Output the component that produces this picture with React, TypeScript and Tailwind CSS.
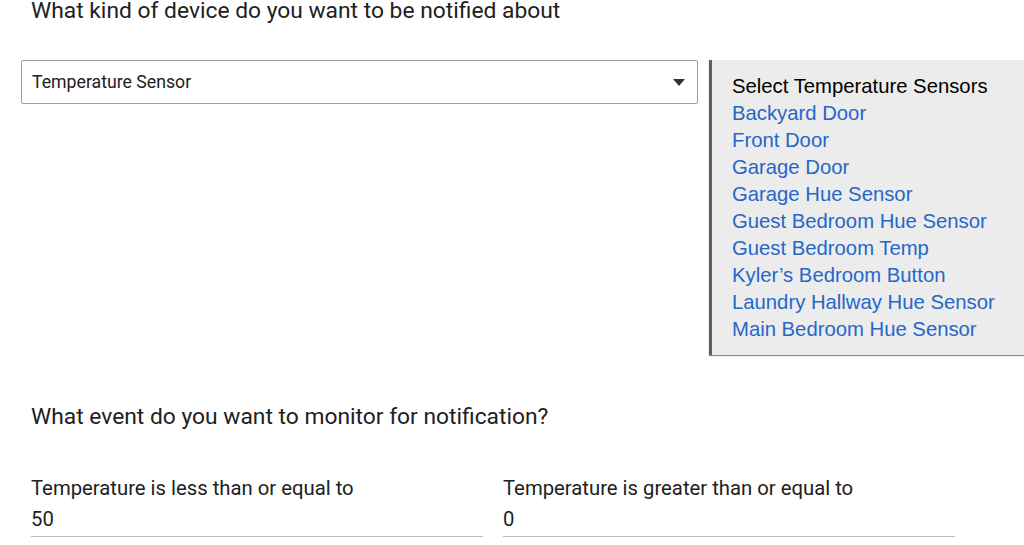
const sensors = [
  "Backyard Door",
  "Front Door",
  "Garage Door",
  "Garage Hue Sensor",
  "Guest Bedroom Hue Sensor",
  "Guest Bedroom Temp",
  "Kyler’s Bedroom Button",
  "Laundry Hallway Hue Sensor",
  "Main Bedroom Hue Sensor",
];

export default function App() {
  return (
    <div className="h-[545px] w-[1024px] overflow-hidden bg-white font-['Roboto',sans-serif] text-[#212121]">
      {/* Device type */}
      <h2 className="pl-[31px] text-[22.8px] leading-[22px] font-normal">
        What kind of device do you want to be notified about
      </h2>

      <div className="mt-[38px] flex items-start">
        <div className="ml-[21px] flex h-[44px] w-[677px] items-center justify-between rounded-[2px] border border-[#9e9e9e] pl-[10px] pr-[12px]">
          <span className="text-[17.7px]">Temperature Sensor</span>
          <svg width="12" height="7" viewBox="0 0 12 7" className="mt-[1px]">
            <path d="M0 0h12L6 7z" fill="#333" />
          </svg>
        </div>

        {/* Sensor picker */}
        <div className="ml-[11px] flex-1 border-l-[3px] border-[#5f5f5f] bg-[#ececec] pt-[13px] pb-[12px] pl-[20px] font-['Liberation_Sans',Arial,sans-serif] text-[20.3px] leading-[27px] shadow-[0_1px_1px_rgba(0,0,0,0.45)]">
          <div className="text-black">Select Temperature Sensors</div>
          {sensors.map((s) => (
            <div key={s} className="text-[#2567c9]">
              {s}
            </div>
          ))}
        </div>
      </div>

      {/* Event */}
      <h2 className="mt-[49px] pl-[31px] text-[22.8px] leading-[26px] font-normal">
        What event do you want to monitor for notification?
      </h2>

      <div className="mt-[45px] flex gap-[20px] pl-[31px]">
        <div className="w-[452px]">
          <div className="text-[20.3px] leading-[26px]">Temperature is less than or equal to</div>
          <div className="mt-[5px] border-b border-[#bdbdbd] pb-[4px] text-[20.3px] leading-[26px]">50</div>
        </div>
        <div className="w-[452px]">
          <div className="text-[20.3px] leading-[26px]">Temperature is greater than or equal to</div>
          <div className="mt-[5px] border-b border-[#bdbdbd] pb-[4px] text-[20.3px] leading-[26px]">0</div>
        </div>
      </div>
    </div>
  );
}
